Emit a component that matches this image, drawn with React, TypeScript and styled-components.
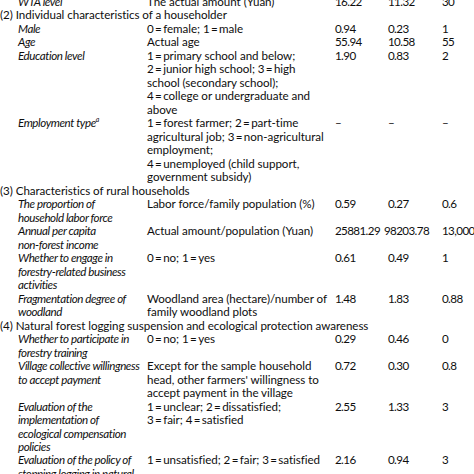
import styled, { createGlobalStyle } from 'styled-components';

const GlobalStyle = createGlobalStyle`
  html, body {
    margin: 0;
    padding: 0;
    background: #ffffff;
  }
`;

const Page = styled.div`
  width: 474px;
  height: 474px;
  overflow: hidden;
  background: #ffffff;
  color: #0e0e0e;
  font-family: Lato, 'Open Sans', sans-serif;
  font-size: 11.6px;
  letter-spacing: -0.05px;
  line-height: 13.48px;
`;

const Table = styled.div`
  margin-top: -5px;
  display: flex;
  flex-direction: column;
`;

const Row = styled.div`
  display: grid;
  grid-template-columns: 147px 188px 53px 54px 1fr;
  white-space: nowrap;
`;

const Label = styled.div`
  padding-left: 18px;
  font-style: italic;
  letter-spacing: -0.42px;
`;

const Section = styled.div`
  white-space: nowrap;
`;

const Cell = styled.div``;

const Value = styled.div<{ $pull?: number }>`
  margin-left: ${(props) => (props.$pull ? `-${props.$pull}px` : '0')};
  letter-spacing: -0.6px;
`;

const Line = styled.div``;

const Note = styled.sup`
  font-size: 7px;
  line-height: 0;
  vertical-align: 5px;
`;

type Item =
  | { kind: 'section'; title: string }
  | {
      kind: 'row';
      label: React.ReactNode[];
      desc: string[];
      values: [string, string, string];
      pull?: number;
    };

const eq = '\u2009=\u2009';

const items: Item[] = [
  { kind: 'row', label: ['WTA level'], desc: ['The actual amount (Yuan)'], values: ['16.22', '11.32', '30'] },
  { kind: 'section', title: '(2) Individual characteristics of a householder' },
  { kind: 'row', label: ['Male'], desc: [`0${eq}female; 1${eq}male`], values: ['0.94', '0.23', '1'] },
  { kind: 'row', label: ['Age'], desc: ['Actual age'], values: ['55.94', '10.58', '55'] },
  {
    kind: 'row',
    label: ['Education level'],
    desc: [
      `1${eq}primary school and below;`,
      `2${eq}junior high school; 3${eq}high`,
      'school (secondary school);',
      `4${eq}college or undergraduate and`,
      'above',
    ],
    values: ['1.90', '0.83', '2'],
  },
  {
    kind: 'row',
    label: [
      <>
        Employment type<Note>a</Note>
      </>,
    ],
    desc: [
      `1${eq}forest farmer; 2${eq}part-time`,
      `agricultural job; 3${eq}non-agricultural`,
      'employment;',
      `4${eq}unemployed (child support,`,
      'government subsidy)',
    ],
    values: ['\u2013', '\u2013', '\u2013'],
  },
  { kind: 'section', title: '(3) Characteristics of rural households' },
  {
    kind: 'row',
    label: ['The proportion of', 'household labor force'],
    desc: ['Labor force/family population (%)'],
    values: ['0.59', '0.27', '0.6'],
  },
  {
    kind: 'row',
    label: ['Annual per capita', 'non-forest income'],
    desc: ['Actual amount/population (Yuan)'],
    values: ['25881.29', '98203.78', '13,000'],
    pull: 4,
  },
  {
    kind: 'row',
    label: ['Whether to engage in', 'forestry-related business', 'activities'],
    desc: [`0${eq}no; 1${eq}yes`],
    values: ['0.61', '0.49', '1'],
  },
  {
    kind: 'row',
    label: ['Fragmentation degree of', 'woodland'],
    desc: ['Woodland area (hectare)/number of', 'family woodland plots'],
    values: ['1.48', '1.83', '0.88'],
  },
  { kind: 'section', title: '(4) Natural forest logging suspension and ecological protection awareness' },
  {
    kind: 'row',
    label: ['Whether to participate in', 'forestry training'],
    desc: [`0${eq}no; 1${eq}yes`],
    values: ['0.29', '0.46', '0'],
  },
  {
    kind: 'row',
    label: ['Village collective willingness', 'to accept payment'],
    desc: ['Except for the sample household', "head, other farmers' willingness to", 'accept payment in the village'],
    values: ['0.72', '0.30', '0.8'],
  },
  {
    kind: 'row',
    label: ['Evaluation of the', 'implementation of', 'ecological compensation', 'policies'],
    desc: [`1${eq}unclear; 2${eq}dissatisfied;`, `3${eq}fair; 4${eq}satisfied`],
    values: ['2.55', '1.33', '3'],
  },
  {
    kind: 'row',
    label: ['Evaluation of the policy of', 'stopping logging in natural', 'forests'],
    desc: [`1${eq}unsatisfied; 2${eq}fair; 3${eq}satisfied`],
    values: ['2.16', '0.94', '3'],
  },
];

const App = () => {
  return (
    <Page>
      <GlobalStyle />
      <Table>
        {items.map((item, i) =>
          item.kind === 'section' ? (
            <Section key={i}>{item.title}</Section>
          ) : (
            <Row key={i}>
              <Label>
                {item.label.map((l, j) => (
                  <Line key={j}>{l}</Line>
                ))}
              </Label>
              <Cell>
                {item.desc.map((d, j) => (
                  <Line key={j}>{d}</Line>
                ))}
              </Cell>
              <Value>{item.values[0]}</Value>
              <Value $pull={item.pull}>{item.values[1]}</Value>
              <Value>{item.values[2]}</Value>
            </Row>
          )
        )}
      </Table>
    </Page>
  );
};

export default App;
